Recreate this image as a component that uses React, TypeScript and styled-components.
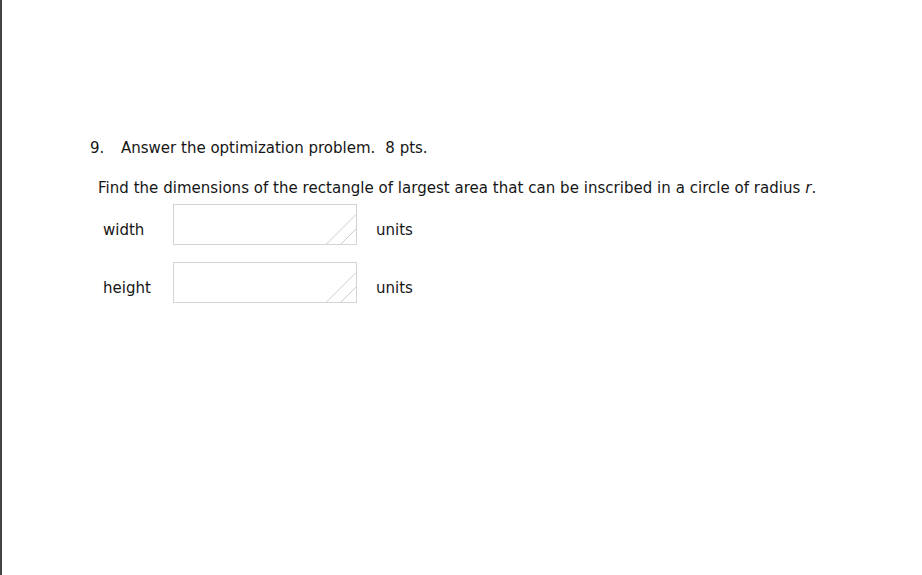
import React from "react";
import styled, { createGlobalStyle } from "styled-components";

const Global = createGlobalStyle`
  html, body { margin: 0; padding: 0; background: #fff; }
  body { font-family: "DejaVu Sans", Verdana, sans-serif; color: #161616; }
`;

const Page = styled.div`
  width: 922px;
  height: 575px;
  box-sizing: border-box;
  border-left: 2px solid #444;
  padding: 138px 0 0 88px;
`;

const Header = styled.div`
  display: flex;
  font-size: 15px;
  line-height: 20px;
`;

const Number = styled.span`
  width: 31px;
`;

const Points = styled.span`
  margin-left: 10px;
`;

const Prompt = styled.p`
  margin: 20px 0 0 8px;
  font-size: 15px;
  line-height: 20px;
  letter-spacing: 0.03px;
`;

const Rows = styled.div`
  display: flex;
  flex-direction: column;
  gap: 17px;
  margin: 6px 0 0 13px;
`;

const Row = styled.div`
  display: flex;
  align-items: flex-start;
`;

const Label = styled.span`
  width: 70px;
  padding-top: 16px;
  font-size: 15px;
  line-height: 20px;
`;

const Box = styled.div`
  position: relative;
  box-sizing: border-box;
  width: 184px;
  height: 41px;
  border: 1px solid #d4d4d4;
  background: #fff;
`;

const Handle = styled.svg`
  position: absolute;
  right: 0;
  bottom: 0;
`;

const Units = styled.span`
  margin-left: 19px;
  padding-top: 16px;
  font-size: 15px;
  line-height: 20px;
`;

function AnswerBox() {
  return (
    <Box>
      <Handle width="30" height="30" viewBox="0 0 30 30">
        <line x1="0.5" y1="30" x2="30" y2="0.5" stroke="#cccccc" strokeWidth="1" />
        <line x1="15" y1="30" x2="30" y2="15" stroke="#cccccc" strokeWidth="1" />
      </Handle>
    </Box>
  );
}

export default function App() {
  return (
    <>
      <Global />
      <Page>
        <Header>
          <Number>9.</Number>
          <span>
            Answer the optimization problem.<Points>8 pts.</Points>
          </span>
        </Header>
        <Prompt>
          Find the dimensions of the rectangle of largest area that can be inscribed in a circle of radius <i>r</i>.
        </Prompt>
        <Rows>
          <Row>
            <Label>width</Label>
            <AnswerBox />
            <Units>units</Units>
          </Row>
          <Row>
            <Label>height</Label>
            <AnswerBox />
            <Units>units</Units>
          </Row>
        </Rows>
      </Page>
    </>
  );
}
